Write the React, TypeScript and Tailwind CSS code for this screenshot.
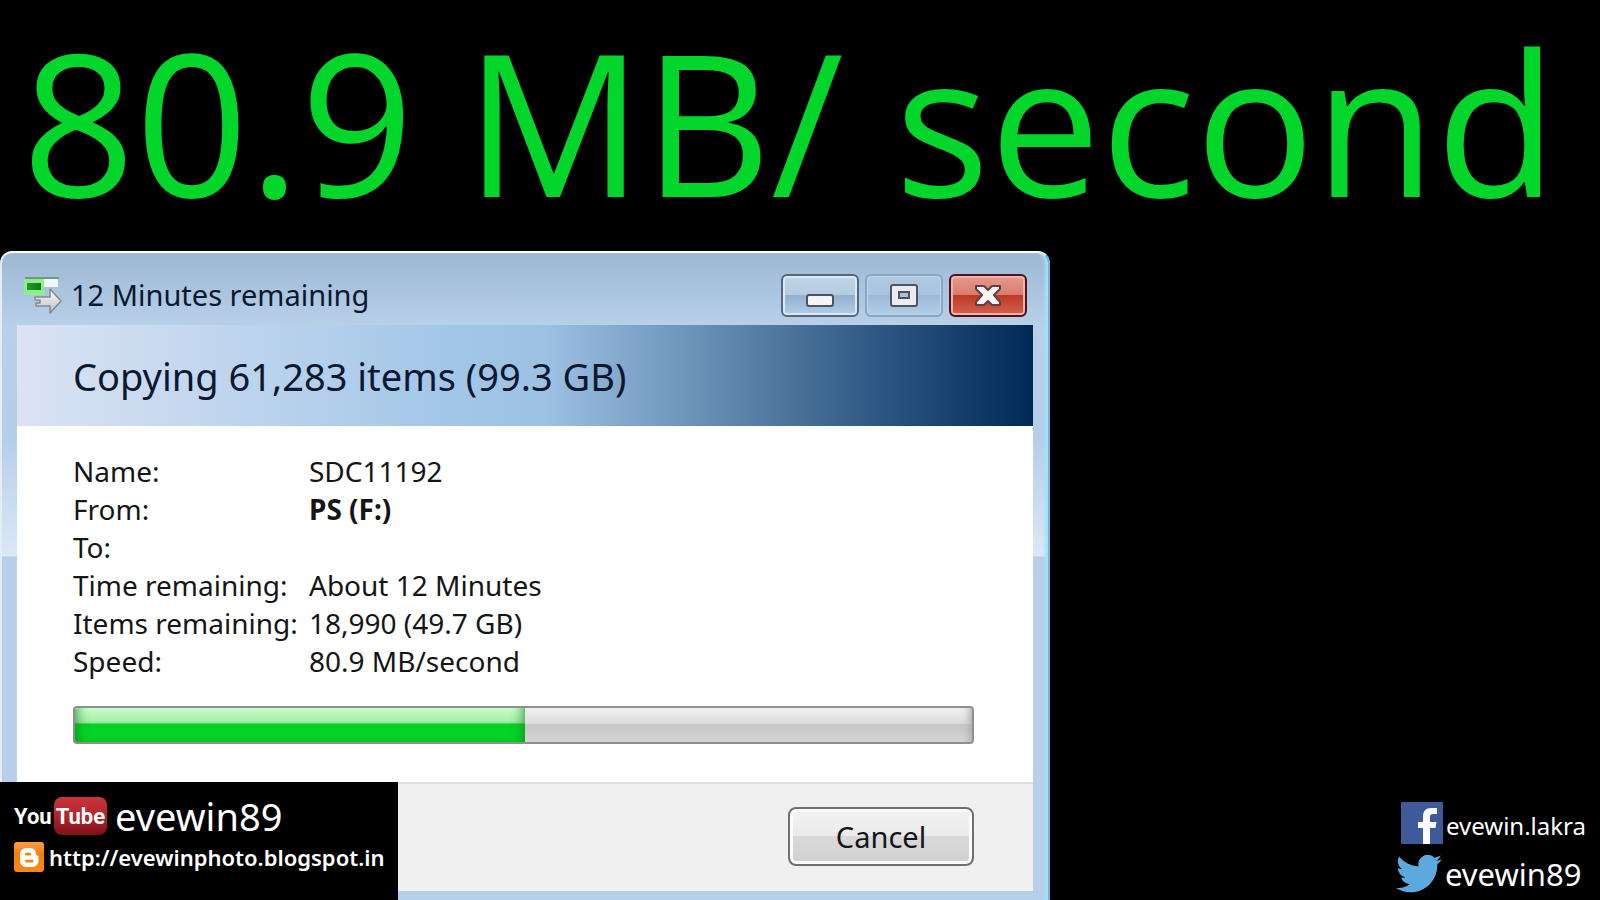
import React from "react";

interface Detail {
  label: string;
  value: string;
  bold?: boolean;
}

const details: Detail[] = [
  { label: "Name:", value: "SDC11192" },
  { label: "From:", value: "PS (F:)", bold: true },
  { label: "To:", value: "" },
  { label: "Time remaining:", value: "About 12 Minutes" },
  { label: "Items remaining:", value: "18,990 (49.7 GB)" },
  { label: "Speed:", value: "80.9 MB/second" },
];

const CopyIcon = () => (
  <svg width="40" height="38" viewBox="0 0 40 38" aria-hidden="true">
    <defs>
      <linearGradient id="copyArrow" x1="0" y1="0" x2="0" y2="1">
        <stop offset="0" stopColor="#ffffff" />
        <stop offset="1" stopColor="#b9bcc0" />
      </linearGradient>
      <linearGradient id="copyGreen" x1="0" y1="0" x2="1" y2="0">
        <stop offset="0" stopColor="#1f9a2c" />
        <stop offset="1" stopColor="#0b7d1c" />
      </linearGradient>
    </defs>
    <rect x="2" y="1" width="34" height="2" fill="#6d9b85" />
    <rect x="20" y="3" width="15" height="8" fill="#f3f6fa" />
    <rect x="1" y="3" width="20" height="16" rx="1" fill="#8cf08a" />
    <rect x="4" y="7" width="14" height="7" fill="url(#copyGreen)" />
    <path
      d="M12 21h15v-8l11 12-11 12v-7H13v-3h4v-3h-5z"
      fill="url(#copyArrow)"
      stroke="#85898f"
      strokeWidth="1.5"
      strokeLinejoin="round"
    />
  </svg>
);

const YouTubeLogo = () => (
  <div className="flex items-center gap-[2px] font-['Roboto',sans-serif] text-[22px] font-bold text-white">
    <span>You</span>
    <span className="flex h-[38px] items-center rounded-lg bg-linear-to-b from-[#c9353c] via-[#b3242b] to-[#7d1218] px-[2px]">
      Tube
    </span>
  </div>
);

const BloggerIcon = () => (
  <svg width="30" height="30" viewBox="0 0 30 30" aria-hidden="true">
    <defs>
      <linearGradient id="blogger" x1="0" y1="0" x2="0" y2="1">
        <stop offset="0" stopColor="#f9a04a" />
        <stop offset="0.4" stopColor="#f57d0d" />
        <stop offset="1" stopColor="#f58a1c" />
      </linearGradient>
    </defs>
    <rect width="30" height="30" rx="3" fill="url(#blogger)" />
    <path
      fill="#fff"
      fillRule="evenodd"
      d="M12 6h4.500a5.500 5.500 0 0 1 5.500 5.500c0 1.500 0.500 2 1.500 2 0.800 0 1 0.500 1 1.200V19a6 6 0 0 1-6 6H12a6 6 0 0 1-6-6v-7a6 6 0 0 1 6-6zm0.200 4.800a1.300 1.300 0 0 0 0 2.600h3.600a1.300 1.300 0 0 0 0-2.600zm0 7a1.300 1.300 0 0 0 0 2.600h6a1.300 1.300 0 0 0 0-2.600z"
    />
  </svg>
);

const FacebookIcon = () => (
  <svg width="42" height="42" viewBox="0 0 42 42" aria-hidden="true">
    <rect width="42" height="42" rx="1" fill="#3f5a9a" />
    <path
      fill="#fff"
      d="M22 42V26h-5v-6h5v-5C22 9 25 6 30 6h6v6h-4c-2.500 0-3 1-3 3v5h6.500l-1 6H29v16z"
    />
  </svg>
);

const TwitterIcon = () => (
  <svg width="46" height="38" viewBox="0 2.500 24 19.500" aria-hidden="true">
    <path
      fill="#5ba9dd"
      d="M23.953 4.570a10 10 0 0 1-2.825.775 4.958 4.958 0 0 0 2.163-2.723c-.951.555-2.005.959-3.127 1.184a4.920 4.920 0 0 0-8.384 4.482C7.690 8.095 4.067 6.130 1.640 3.162a4.822 4.822 0 0 0-.666 2.475c0 1.710.870 3.213 2.188 4.096a4.904 4.904 0 0 1-2.228-.616v.060a4.923 4.923 0 0 0 3.946 4.827 4.996 4.996 0 0 1-2.212.085 4.936 4.936 0 0 0 4.604 3.417 9.867 9.867 0 0 1-6.102 2.105c-.390 0-.779-.023-1.170-.067a13.995 13.995 0 0 0 7.557 2.209c9.053 0 13.998-7.496 13.998-13.985 0-.210 0-.420-.015-.630A9.935 9.935 0 0 0 24 4.590z"
    />
  </svg>
);

const WindowButtons = () => (
  <div className="flex gap-[6px]">
    <button
      type="button"
      aria-label="Minimize"
      className="flex h-[43px] w-[78px] items-center justify-center rounded-md border-2 border-[#56687f] bg-[linear-gradient(#c3d5e8_0%,#b4cbe2_48%,#93b0cd_50%,#b2cee8_100%)] shadow-[inset_0_0_0_2px_#dce9f5]"
    >
      <svg width="28" height="13" viewBox="0 0 28 13" className="mt-[10px]">
        <rect x="1" y="1" width="26" height="11" rx="2" fill="#f4f4f6" stroke="#4d5564" strokeWidth="2" />
      </svg>
    </button>
    <button
      type="button"
      aria-label="Maximize"
      className="flex h-[43px] w-[78px] items-center justify-center rounded-md border-2 border-[#8ba6c2] bg-[linear-gradient(#b0c9e2_0%,#a9c4df_48%,#9dbad7_50%,#b0cde9_100%)] shadow-[inset_0_0_0_1px_#c0d6ea]"
    >
      <svg width="28" height="23" viewBox="0 0 28 23">
        <rect x="1" y="1" width="26" height="21" rx="2" fill="#ececf0" stroke="#4d5564" strokeWidth="2" />
        <rect x="9" y="8" width="10" height="6" fill="#a9c1da" stroke="#4d5564" strokeWidth="2" />
      </svg>
    </button>
    <button
      type="button"
      aria-label="Close"
      className="flex h-[43px] w-[78px] items-center justify-center rounded-md border-2 border-[#4a1420] bg-[linear-gradient(#e79c8e_0%,#d97b6c_48%,#bf3a25_50%,#d3614c_100%)] shadow-[inset_0_0_0_2px_#efb3a8]"
    >
      <svg width="28" height="23" viewBox="0 0 28 23">
        <path
          d="M2 2h8l4 4 4-4h8v3l-6 6 6 7v3h-8l-4-4-4 4H2v-3l6-7-6-6z"
          fill="#f6f3f3"
          stroke="#5b4047"
          strokeWidth="2"
          strokeLinejoin="round"
        />
      </svg>
    </button>
  </div>
);

const CopyDialog = () => (
  <section
    aria-label="12 Minutes remaining"
    className="flex w-[65.625%] flex-col rounded-t-xl border-t-2 border-r-2 border-l-2 border-t-white border-r-[#6fb6d8] border-l-[#e3edf5] bg-[linear-gradient(#9db8d4_0px,#b9d0e9_74px,#b4cde8_180px,#dbe8f5_303px,#b7cfe9_304px)] pr-[15px] pb-[9px] pl-[15px] shadow-[inset_-4px_0_3px_-1px_#a5e0fb]"
  >
    <div className="flex h-[72px] items-center justify-between pt-3 pr-[6px]">
      <div className="flex items-center gap-2 pl-[6px] text-[29px] text-[#0b1830]">
        <CopyIcon />
        <span>12 Minutes remaining</span>
      </div>
      <WindowButtons />
    </div>

    <h2 className="flex h-[101px] items-center bg-[linear-gradient(to_right,#dbe3f4_0%,#a3c7e8_42%,#9dc1e3_52%,#5a80a8_72%,#29547f_86%,#002a56_100%)] pt-[2px] pl-14 text-[38px] text-[#0b1830]">
      Copying 61,283 items (99.3 GB)
    </h2>

    <div className="flex flex-1 flex-col bg-white pt-[26px] pr-[59px] pl-14">
      <table className="w-full text-left text-[28px] leading-[38px] text-[#151515]">
        <tbody>
          {details.map((d) => (
            <tr key={d.label}>
              <th scope="row" className="h-[38px] w-[236px] p-0 font-normal whitespace-nowrap">
                {d.label}
              </th>
              <td className={d.bold ? "p-0 font-bold" : "p-0"}>{d.value}</td>
            </tr>
          ))}
        </tbody>
      </table>

      <div
        role="progressbar"
        aria-label="Copy progress"
        aria-valuenow={50}
        className="mt-[26px] h-[38px] overflow-hidden rounded border-2 border-[#8f8f8f] bg-[linear-gradient(#f4f4f4_0%,#dcdcdc_45%,#c6c6c6_50%,#d6d6d6_100%)] shadow-[inset_-8px_0_8px_-6px_#a8a8a8]"
      >
        <div
          className="h-full bg-[linear-gradient(#c8ffc8_0%,#a6eba8_42%,#05d223_48%,#02d426_100%)] shadow-[inset_14px_-4px_14px_-14px_#14801f,inset_-14px_-4px_14px_-14px_#14801f]"
          style={{ width: "50.2%" }}
        />
      </div>
    </div>

    <div className="flex h-[109px] justify-end border-t-2 border-[#dfdfdf] bg-[#f0f0f0] pt-[23px] pr-[59px]">
      <button
        type="button"
        className="h-[59px] w-[186px] rounded-lg border-2 border-[#707070] bg-[linear-gradient(#f2f2f2_0%,#ebebeb_48%,#dadada_50%,#cfcfcf_100%)] text-[29px] text-[#151515] shadow-[inset_0_0_0_3px_#fbfbfb]"
      >
        Cancel
      </button>
    </div>
  </section>
);

export default function App() {
  return (
    <div className="relative flex min-h-screen flex-col bg-black font-['Noto_Sans','Open_Sans',sans-serif]">
      <h1 className="h-[251px] pl-[22px] font-['Open_Sans','Noto_Sans',sans-serif] text-[198px] leading-[240px] whitespace-nowrap text-[#02d62b]">
        80.9 MB/ second
      </h1>

      <main className="flex flex-1 justify-between">
        <CopyDialog />

        <div className="flex flex-col justify-end gap-2 pr-[14px] pb-[7px] text-white">
          <a href="#facebook" className="flex items-center gap-[3px] pl-[5px] text-2xl leading-[42px]">
            <FacebookIcon />
            <span className="pt-[6px]">evewin.lakra</span>
          </a>
          <a href="#twitter" className="flex items-center gap-[3px] text-[31px] leading-[38px]">
            <TwitterIcon />
            evewin89
          </a>
        </div>
      </main>

      {/* Channel banner over the dialog corner */}
      <div className="absolute bottom-0 left-0 flex h-[118px] w-[398px] flex-col bg-black pt-[15px] pl-[14px] text-white">
        <a href="#youtube" className="flex h-[38px] items-center gap-2 text-[38px]">
          <YouTubeLogo />
          evewin89
        </a>
        <a href="#blog" className="mt-[7px] flex h-[30px] items-center gap-[5px] text-[22px] font-semibold">
          <BloggerIcon />
          http://evewinphoto.blogspot.in
        </a>
      </div>
    </div>
  );
}
